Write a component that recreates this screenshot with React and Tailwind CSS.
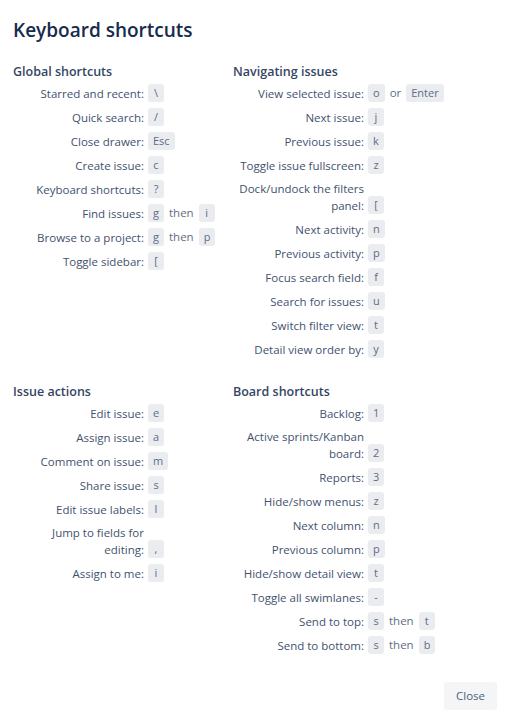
import React from "react";

const sections = [
  {
    title: "Global shortcuts",
    rows: [
      { label: "Starred and recent:", keys: ["\\"] },
      { label: "Quick search:", keys: ["/"] },
      { label: "Close drawer:", keys: ["Esc"] },
      { label: "Create issue:", keys: ["c"] },
      { label: "Keyboard shortcuts:", keys: ["?"] },
      { label: "Find issues:", keys: ["g", "then", "i"] },
      { label: "Browse to a project:", keys: ["g", "then", "p"] },
      { label: "Toggle sidebar:", keys: ["["] },
    ],
  },
  {
    title: "Navigating issues",
    rows: [
      { label: "View selected issue:", keys: ["o", "or", "Enter"] },
      { label: "Next issue:", keys: ["j"] },
      { label: "Previous issue:", keys: ["k"] },
      { label: "Toggle issue fullscreen:", keys: ["z"] },
      { label: "Dock/undock the filters panel:", keys: ["["] },
      { label: "Next activity:", keys: ["n"] },
      { label: "Previous activity:", keys: ["p"] },
      { label: "Focus search field:", keys: ["f"] },
      { label: "Search for issues:", keys: ["u"] },
      { label: "Switch filter view:", keys: ["t"] },
      { label: "Detail view order by:", keys: ["y"] },
    ],
  },
  {
    title: "Issue actions",
    rows: [
      { label: "Edit issue:", keys: ["e"] },
      { label: "Assign issue:", keys: ["a"] },
      { label: "Comment on issue:", keys: ["m"] },
      { label: "Share issue:", keys: ["s"] },
      { label: "Edit issue labels:", keys: ["l"] },
      { label: "Jump to fields for editing:", keys: [","] },
      { label: "Assign to me:", keys: ["i"] },
    ],
  },
  {
    title: "Board shortcuts",
    rows: [
      { label: "Backlog:", keys: ["1"] },
      { label: "Active sprints/Kanban board:", keys: ["2"] },
      { label: "Reports:", keys: ["3"] },
      { label: "Hide/show menus:", keys: ["z"] },
      { label: "Next column:", keys: ["n"] },
      { label: "Previous column:", keys: ["p"] },
      { label: "Hide/show detail view:", keys: ["t"] },
      { label: "Toggle all swimlanes:", keys: ["-"] },
      { label: "Send to top:", keys: ["s", "then", "t"] },
      { label: "Send to bottom:", keys: ["s", "then", "b"] },
    ],
  },
];

function Key({ k }) {
  if (k === "then" || k === "or") {
    return <span className="px-[2px] text-[11.5px] text-[#5e6c84]">{k}</span>;
  }
  return (
    <kbd className="inline-flex h-[18px] min-w-[16px] items-center justify-center rounded-[3px] bg-[#ebecf0] px-[5px] text-[11px] text-[#5e6c84] [font-family:inherit]">
      {k}
    </kbd>
  );
}

function Section({ title, rows }) {
  return (
    <div className="w-[220px]">
      <h3 className="mb-[3px] text-[12.5px] font-semibold leading-[18px] text-[#344563]">{title}</h3>
      <div className="flex flex-col gap-[6px]">
        {rows.map((r, i) => (
          <div key={i} className="flex items-end">
            <span className="w-[131px] text-right text-[11.5px] leading-[17px] text-[#42526e]">{r.label}</span>
            <span className="ml-[4px] flex items-center gap-[3px]">
              {r.keys.map((k, j) => (
                <Key key={j} k={k} />
              ))}
            </span>
          </div>
        ))}
      </div>
    </div>
  );
}

export default function App() {
  return (
    <div className="h-[724px] w-[512px] bg-white px-[13px] pt-[16px] [font-family:'Open_Sans','Noto_Sans',sans-serif]">
      <h2 className="text-[19px] font-semibold leading-[28px] text-[#172b4d]">Keyboard shortcuts</h2>
      <div className="mt-[19px] grid grid-cols-[220px_220px] gap-y-[25px]">
        {sections.map((s) => (
          <Section key={s.title} {...s} />
        ))}
      </div>
      <div className="mt-[28px] flex justify-end pr-[2px]">
        <button className="h-[28px] rounded-[3px] bg-[#f4f5f7] px-[12px] text-[11.5px] font-medium text-[#505f79]">
          Close
        </button>
      </div>
    </div>
  );
}
